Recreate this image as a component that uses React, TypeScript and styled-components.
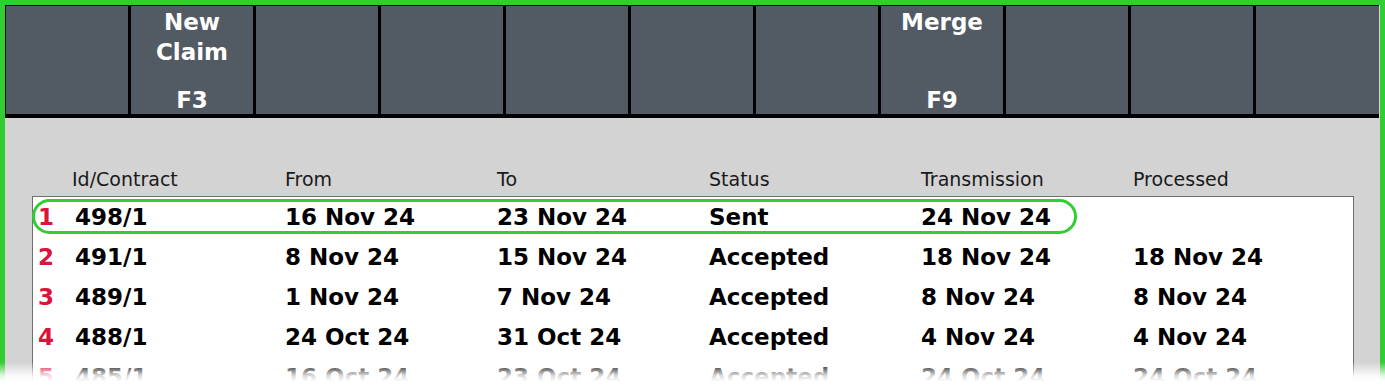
import React from 'react';
import styled, {createGlobalStyle} from "styled-components";

const GlobalStyle = createGlobalStyle`
    html, body {
        margin: 0;
        padding: 0;
        height: 100%;
        overflow: hidden;
        background: #ffffff;
    }
    body {
        font-family: "DejaVu Sans", Verdana, sans-serif;
    }
`

type Claim = {
    id: string
    from: string
    to: string
    status: string
    transmission: string
    processed: string
}

const keys: { label: string, key: string }[] = [
    {label: '', key: ''},
    {label: 'New Claim', key: 'F3'},
    {label: '', key: ''},
    {label: '', key: ''},
    {label: '', key: ''},
    {label: '', key: ''},
    {label: '', key: ''},
    {label: 'Merge', key: 'F9'},
    {label: '', key: ''},
    {label: '', key: ''},
    {label: '', key: ''},
]

const claims: Claim[] = [
    {id: '498/1', from: '16 Nov 24', to: '23 Nov 24', status: 'Sent', transmission: '24 Nov 24', processed: ''},
    {id: '491/1', from: '8 Nov 24', to: '15 Nov 24', status: 'Accepted', transmission: '18 Nov 24', processed: '18 Nov 24'},
    {id: '489/1', from: '1 Nov 24', to: '7 Nov 24', status: 'Accepted', transmission: '8 Nov 24', processed: '8 Nov 24'},
    {id: '488/1', from: '24 Oct 24', to: '31 Oct 24', status: 'Accepted', transmission: '4 Nov 24', processed: '4 Nov 24'},
    {id: '485/1', from: '16 Oct 24', to: '23 Oct 24', status: 'Accepted', transmission: '24 Oct 24', processed: '24 Oct 24'},
]

export default function App() {
    return (
        <>
            <GlobalStyle/>
            <Frame>
                <Toolbar>
                    {keys.map((k, i) => (
                        <KeyButton key={i} $last={i === keys.length - 1}>
                            <KeyLabel>{k.label}</KeyLabel>
                            <KeyName>{k.key}</KeyName>
                        </KeyButton>
                    ))}
                </Toolbar>
                <Content>
                    <HeaderRow>
                        <span/>
                        <HeadCell $shift={-3}>Id/Contract</HeadCell>
                        <HeadCell>From</HeadCell>
                        <HeadCell>To</HeadCell>
                        <HeadCell>Status</HeadCell>
                        <HeadCell>Transmission</HeadCell>
                        <HeadCell>Processed</HeadCell>
                    </HeaderRow>
                    <ListBox>
                        {claims.map((c, i) => (
                            <Row key={c.id} $selected={i === 0}>
                                <Index>{i + 1}</Index>
                                <Cell>{c.id}</Cell>
                                <Cell>{c.from}</Cell>
                                <Cell>{c.to}</Cell>
                                <Cell>{c.status}</Cell>
                                <Cell>{c.transmission}</Cell>
                                <Cell>{c.processed}</Cell>
                            </Row>
                        ))}
                    </ListBox>
                </Content>
            </Frame>
            <Fade/>
        </>
    );
};

const Frame = styled.div`
    box-sizing: border-box;
    height: 440px;
    border: 5px solid #32cd32;
    border-bottom: none;
    background-color: #d3d3d3;
`

const Toolbar = styled.div`
    display: flex;
    width: 1373px;
    border-top: 1px solid #000;
    border-left: 1px solid #000;
    border-bottom: 4px solid #000;
    background-color: #525a64;
`

const KeyButton = styled.div<{ $last?: boolean }>`
    box-sizing: content-box;
    width: ${p => p.$last ? '123px' : '122px'};
    height: 107px;
    padding-top: 1px;
    border-right: ${p => p.$last ? 'none' : '3px solid #000'};
    display: flex;
    flex-direction: column;
    justify-content: space-between;
    align-items: center;
    color: #ffffff;
    font-weight: bold;
    font-size: 23px;
    line-height: 30px;
    text-align: center;
`

const KeyLabel = styled.div`
    width: 90px;
`

const KeyName = styled.div`
    margin-bottom: -1px;
`

const Content = styled.div`
    padding: 50px 26px 0 27px;
`

const HeaderRow = styled.div`
    display: grid;
    grid-template-columns: 42px 210px repeat(5, 212px);
    height: 24px;
    margin-bottom: 4px;
    padding-left: 1px;
    font-size: 19px;
    line-height: 22px;
    color: #1a1a1a;
`

const HeadCell = styled.span<{ $shift?: number }>`
    margin-left: ${p => p.$shift ?? 0}px;
    white-space: nowrap;
`

const ListBox = styled.div`
    background: #ffffff;
    border: 1px solid #707070;
    height: 260px;
`

const Row = styled.div<{ $selected?: boolean }>`
    position: relative;
    display: grid;
    grid-template-columns: 42px 210px repeat(5, 212px);
    height: 40px;
    font-weight: bold;
    font-size: 23px;
    line-height: 40px;
    color: #000;

    &::before {
        content: '';
        display: ${p => p.$selected ? 'block' : 'none'};
        position: absolute;
        left: -1px;
        top: 2px;
        width: 1045px;
        height: 35px;
        box-sizing: border-box;
        border: 3.5px solid #32cd32;
        border-radius: 18px;
        pointer-events: none;
    }
`

const Index = styled.span`
    padding-left: 5px;
    color: #dc143c;
`

const Cell = styled.span`
    white-space: nowrap;
`

const Fade = styled.div`
    position: fixed;
    left: 0;
    right: 0;
    bottom: 0;
    height: 30px;
    background: linear-gradient(to bottom, rgba(255, 255, 255, 0) 0%, rgba(255, 255, 255, 0.85) 45%, #ffffff 65%);
    pointer-events: none;
`
